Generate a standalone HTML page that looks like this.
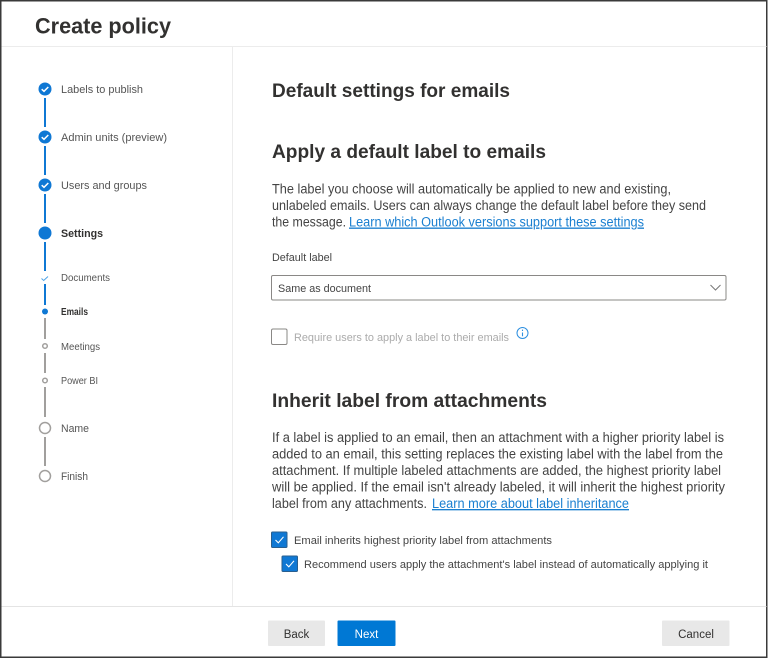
<!DOCTYPE html>
<html><head><meta charset="utf-8"><style>
html,body{margin:0;padding:0;background:#fff;overflow:hidden}
svg{display:block;filter:blur(.3px)}
text{font-family:"Liberation Sans",sans-serif;fill:#444;font-size:13.5px}
.h{font-weight:bold;font-size:19px;fill:#323130}
.s{font-size:11px;fill:#555}
.d{font-size:10px;fill:#555}
.b{font-weight:bold;fill:#323130}
.l{fill:#1a7fd0;text-decoration:underline}
.c{font-size:11px;fill:#444}
.btn{font-size:11.5px;fill:#323130;text-anchor:middle}
</style></head><body>
<svg xmlns="http://www.w3.org/2000/svg" width="768" height="658" viewBox="0 0 768 658">
<rect width="768" height="658" fill="#fff"/>
<rect x="0.75" y="0.75" width="766" height="656.5" fill="none" stroke="#3a3a3a" stroke-width="1.5"/>
<rect x="1.5" y="46" width="765" height="1" fill="#ececec"/>
<rect x="232" y="47" width="1" height="559" fill="#ececec"/>
<rect x="1.5" y="606" width="765" height="1" fill="#e4e4e4"/>

<text x="35" y="33.5" class="h" style="font-size:22.5px" textLength="136" lengthAdjust="spacingAndGlyphs">Create policy</text>

<g stroke="#0f78d4" stroke-width="2" fill="none">
<path d="M45 98V127M45 146V175M45 194V223M45 242V271M45 284V305"/>
</g>
<g stroke="#a19f9d" stroke-width="2" fill="none">
<path d="M45 318V339M45 353V373M45 387V417M45 437V466"/>
</g>
<g fill="#0f78d4">
<circle cx="45" cy="89" r="6.5"/><circle cx="45" cy="137" r="6.5"/><circle cx="45" cy="185" r="6.5"/><circle cx="45" cy="233" r="6.5"/><circle cx="45" cy="311.5" r="3"/>
</g>
<g stroke="#fff" stroke-width="1.5" fill="none">
<path d="M41.7 89.2L44 91.3L48.3 87M41.7 137.2L44 139.3L48.3 135M41.7 185.2L44 187.3L48.3 183"/>
</g>
<path d="M41.5 278.5L43.7 280.5L48 276.5" stroke="#4ea3e6" stroke-width="1" fill="none"/>
<g stroke="#a19f9d" fill="#fff">
<circle cx="45" cy="346" r="2.3" stroke-width="1.5"/><circle cx="45" cy="380.5" r="2.3" stroke-width="1.5"/>
<circle cx="45" cy="428" r="5.5" stroke-width="1.5"/><circle cx="45" cy="476" r="5.5" stroke-width="1.5"/>
</g>
<text x="61" y="93" class="s" textLength="82" lengthAdjust="spacingAndGlyphs">Labels to publish</text>
<text x="61" y="141" class="s" textLength="106" lengthAdjust="spacingAndGlyphs">Admin units (preview)</text>
<text x="61" y="189" class="s" textLength="86" lengthAdjust="spacingAndGlyphs">Users and groups</text>
<text x="61" y="237" class="s b" style="fill:#323130" textLength="42" lengthAdjust="spacingAndGlyphs">Settings</text>
<text x="61" y="281" class="d" textLength="49" lengthAdjust="spacingAndGlyphs">Documents</text>
<text x="61" y="315" class="d b" style="fill:#323130" textLength="27" lengthAdjust="spacingAndGlyphs">Emails</text>
<text x="61" y="350" class="d" textLength="39" lengthAdjust="spacingAndGlyphs">Meetings</text>
<text x="61" y="384" class="d" textLength="37" lengthAdjust="spacingAndGlyphs">Power BI</text>
<text x="61" y="432" class="s" textLength="28" lengthAdjust="spacingAndGlyphs">Name</text>
<text x="61" y="480" class="s" textLength="27" lengthAdjust="spacingAndGlyphs">Finish</text>

<text x="272" y="97" class="h" textLength="238" lengthAdjust="spacingAndGlyphs">Default settings for emails</text>
<text x="272" y="158" class="h" textLength="274" lengthAdjust="spacingAndGlyphs">Apply a default label to emails</text>
<text x="272" y="193.5" textLength="399" lengthAdjust="spacingAndGlyphs">The label you choose will automatically be applied to new and existing,</text>
<text x="272" y="210" textLength="434" lengthAdjust="spacingAndGlyphs">unlabeled emails. Users can always change the default label before they send</text>
<text x="272" y="226.5" textLength="74" lengthAdjust="spacingAndGlyphs">the message.</text>
<text x="349" y="226.5" class="l" textLength="295" lengthAdjust="spacingAndGlyphs">Learn which Outlook versions support these settings</text>

<text x="272" y="261" class="c" textLength="60" lengthAdjust="spacingAndGlyphs">Default label</text>
<rect x="271.5" y="275.5" width="454.5" height="24.5" rx="1.5" fill="#fff" stroke="#8a8886"/>
<text x="278" y="292" class="c" textLength="93" lengthAdjust="spacingAndGlyphs">Same as document</text>
<path d="M710.5 285L715.5 290L720.5 285" stroke="#777" fill="none"/>

<rect x="271.5" y="329" width="15.5" height="15.5" rx="1.5" fill="#fff" stroke="#8a8886"/>
<text x="294" y="341" class="c" style="fill:#ababab" textLength="215" lengthAdjust="spacingAndGlyphs">Require users to apply a label to their emails</text>
<circle cx="522.5" cy="333" r="5.5" fill="none" stroke="#2d8fe0" stroke-width="1"/>
<path d="M522.5 332.5V336.2M522.5 329.6V331" stroke="#2d8fe0" stroke-width="1.1"/>

<text x="272" y="407" class="h" textLength="275" lengthAdjust="spacingAndGlyphs">Inherit label from attachments</text>
<text x="272" y="442" textLength="452" lengthAdjust="spacingAndGlyphs">If a label is applied to an email, then an attachment with a higher priority label is</text>
<text x="272" y="458.5" textLength="451" lengthAdjust="spacingAndGlyphs">added to an email, this setting replaces the existing label with the label from the</text>
<text x="272" y="475" textLength="449" lengthAdjust="spacingAndGlyphs">attachment. If multiple labeled attachments are added, the highest priority label</text>
<text x="272" y="491.5" textLength="453" lengthAdjust="spacingAndGlyphs">will be applied. If the email isn't already labeled, it will inherit the highest priority</text>
<text x="272" y="508" textLength="155" lengthAdjust="spacingAndGlyphs">label from any attachments.</text>
<text x="432" y="508" class="l" textLength="197" lengthAdjust="spacingAndGlyphs">Learn more about label inheritance</text>

<rect x="271.5" y="532" width="15.5" height="15.5" rx="1" fill="#0f78d4" stroke="#2a5f8f"/>
<path d="M275.5 540L278.3 542.8L283.5 536.8" stroke="#fff" stroke-width="1.1" fill="none"/>
<text x="294" y="544" class="c" textLength="258" lengthAdjust="spacingAndGlyphs">Email inherits highest priority label from attachments</text>
<rect x="282" y="556" width="15.5" height="15.5" rx="1" fill="#0f78d4" stroke="#2a5f8f"/>
<path d="M286 564L288.8 566.8L294 560.8" stroke="#fff" stroke-width="1.1" fill="none"/>
<text x="304" y="568" class="c" textLength="404" lengthAdjust="spacingAndGlyphs">Recommend users apply the attachment's label instead of automatically applying it</text>

<rect x="268" y="620.5" width="57" height="25.5" rx="1" fill="#e8e8e8"/>
<text x="296.5" y="638" class="btn">Back</text>
<rect x="337.5" y="620.5" width="58" height="25.5" rx="1" fill="#0078d4"/>
<text x="366.5" y="638" class="btn" style="fill:#fff">Next</text>
<rect x="662" y="620.5" width="67.5" height="25.5" rx="1" fill="#e8e8e8"/>
<text x="696" y="638" class="btn">Cancel</text>
</svg>
</body></html>
